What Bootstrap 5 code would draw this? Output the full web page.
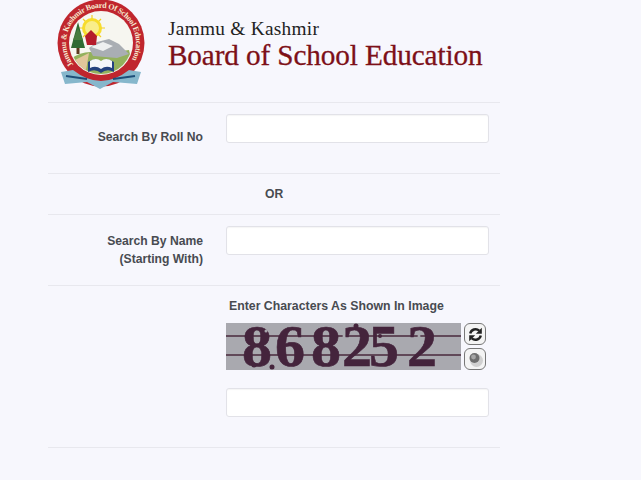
<!DOCTYPE html>
<html lang="en"><head><meta charset="utf-8"><title>Board of School Education</title>
<link href="https://cdn.jsdelivr.net/npm/bootstrap@5.3.0/dist/css/bootstrap.min.css" rel="stylesheet">
<style>
html,body{height:480px;overflow:hidden}
body{background:#f7f7fd;font-family:"Liberation Sans",Arial,sans-serif;color:#484b51}
.page-wrap{width:452px;margin-left:48px}
.brand-row{height:102px;gap:21px;margin-left:9px}
.logo-svg{width:90px;height:92px;flex:none;align-self:flex-start}
.brand-txt{font-family:"Liberation Serif",serif;margin-top:-13px}
.brand-top{font-size:19.3px;line-height:22px;color:#222;letter-spacing:.3px}
.brand-main{font-size:29.2px;line-height:31px;color:#7d1018;letter-spacing:-.1px;white-space:nowrap;-webkit-text-stroke:.3px #7d1018}
.form-line{border-top:1px solid #e8e8ee}
.lbl{width:155px;flex:none;text-align:right;font-weight:700;font-size:12.15px;line-height:18px}
.fld{width:263px;flex:none;margin-left:23px}
.in-box{height:29px;min-height:0;padding:4px 8px;border:1px solid #e2e2e8;border-radius:3px;background:#fff;box-shadow:inset 0 1px 1px rgba(0,0,0,.04)}
.row-roll{height:71px;padding-top:11px}
.row-roll .lbl{padding-top:14px}
.row-or{height:41px;padding-top:11px;font-weight:700;font-size:12.15px;line-height:18px;padding-left:217px}
.row-name{height:71px;padding-top:11px}
.row-name .lbl{padding-top:6px}
.row-cap{height:162px;padding-top:11px}
.cap-title{font-weight:700;font-size:12.3px;line-height:18px;margin-left:3px;margin-bottom:8px}
.cap-img{width:235px;height:47px;display:block;flex:none;overflow:visible}
.cap-btns{gap:3px;margin-left:3px}
.cap-btn{width:22px;height:22px;padding:0;border:1.5px solid #777;border-radius:6px;background:#f4f4f4;display:flex;align-items:center;justify-content:center}
.cap-input{margin-top:18px}
</style></head>
<body>
<div class="page-wrap">
 <div class="d-flex align-items-center brand-row">
  <svg class="logo-svg" viewBox="0 0 90 92" role="img" aria-label="Logo">
   <defs><path id="ringp" d="M16.5 64.6 A35 35 0 1 1 73 62.5"/><clipPath id="inn"><circle cx="44" cy="43" r="31"/></clipPath></defs>
   <circle cx="44" cy="43" r="43.5" fill="#c0262e"/>
   <circle cx="44" cy="43" r="32" fill="#f6f6f0"/>
   <g clip-path="url(#inn)">
    <g stroke="#f3cf22" stroke-width="1.2"><path d="M35 15 V41 M22 28 H48 M26 19 L44 37 M44 19 L26 37"/></g>
    <circle cx="35" cy="28" r="10" fill="#f7dc2c"/>
    <circle cx="35" cy="28" r="7" fill="#f9ed8a"/>
    <path d="M12 60 Q28 48 44 54 L72 50 L78 76 L12 76Z" fill="#93b15c"/>
    <path d="M14 62 L32 53 L28 76 L14 72Z" fill="#e2c79b"/>
    <path d="M32 48 L40 42 L52 39 L62 44 L72 54 L60 58 L36 56Z" fill="#a9aeb3"/>
    <path d="M34 47 L46 42 L56 46 L46 51Z" fill="#eef0f0"/>
    <path d="M21 22 L28 48 L14 48Z" fill="#2f6b33"/>
    <path d="M21 28 L26 40 L16 40Z" fill="#477d3d"/>
    <rect x="19.5" y="48" width="3" height="6" fill="#5d3a1e"/>
    <path d="M28 36 L34 30 L40 36 L39 45 L30 45Z" fill="#b51c2b"/>
   </g>
   <path d="M31 62 Q38 57 44 62 Q50 57 57 62 L57 72 Q50 68 44 73 Q38 68 31 72Z" fill="#24427e"/>
   <path d="M33 61 Q39 57 44 61 L44 69 Q39 65 33 68Z M55 61 Q49 57 44 61 L44 69 Q49 65 55 68Z" fill="#f4f6fa"/>
   <text font-family="Liberation Serif" font-weight="700" font-size="8" fill="#f6e9d0"><textPath href="#ringp" textLength="150">Jammu &amp; Kashmir Board Of School Education</textPath></text>
   <path d="M4 72 L16 70 Q44 92 72 70 L84 72 L80 84 L56 82 L43 89 L30 82 L8 84Z" fill="#86b7cc"/>
   <path d="M9 76 L30 79 M56 79 L78 76" stroke="#1d4e79" stroke-width="2"/>
  </svg>
  <div class="brand-txt">
   <div class="brand-top">Jammu &amp; Kashmir</div>
   <div class="brand-main">Board of School Education</div>
  </div>
 </div>

 <div class="form-line row-roll d-flex">
  <label class="lbl" for="roll">Search By Roll No</label>
  <div class="fld"><input id="roll" class="form-control in-box" type="text"></div>
 </div>
 <div class="form-line row-or">OR</div>
 <div class="form-line row-name d-flex">
  <label class="lbl" for="nm">Search By Name<br>(Starting With)</label>
  <div class="fld"><input id="nm" class="form-control in-box" type="text"></div>
 </div>
 <div class="form-line row-cap d-flex">
  <div class="lbl"></div>
  <div class="fld">
   <div class="cap-title">Enter Characters As Shown In Image</div>
   <div class="d-flex align-items-center">
    <svg class="cap-img" viewBox="0 0 235 47" role="img" aria-label="Captcha">
     <rect width="235" height="47" fill="#a9a9af"/>
     <path d="M0 13 H235 M0 32 H235" stroke="#4a2a3e" stroke-width="1.6"/>
     <text y="43" x="16 49 85 116 143 181" font-family="Liberation Serif" font-weight="700" font-size="60" fill="#44243c" stroke="#44243c" stroke-width=".6">868252</text>
     <g fill="#44243c"><circle cx="28" cy="42" r="2.5"/><circle cx="46" cy="44" r="2.5"/><circle cx="130" cy="3" r="2.5"/><circle cx="154" cy="13" r="2"/></g>
     <g fill="#a9a9af"><circle cx="40" cy="8" r="1.5"/><circle cx="66" cy="27" r="1.5"/><circle cx="118" cy="13" r="1.5"/><circle cx="193" cy="13" r="1.5"/></g>
    </svg>
    <div class="d-flex flex-column cap-btns">
     <button class="cap-btn" type="button" aria-label="Refresh">
      <svg width="17" height="17" viewBox="0 0 17 17" fill="none"><path d="M3.2 7.5 A5.5 5.5 0 0 1 12.2 4.6" stroke="#222" stroke-width="2.4"/><path d="M14.8 1.8 V7.8 H8.8Z" fill="#222"/><path d="M13.8 9.5 A5.5 5.5 0 0 1 4.8 12.4" stroke="#222" stroke-width="2.4"/><path d="M2.2 15.2 V9.2 H8.2Z" fill="#222"/></svg>
     </button>
     <button class="cap-btn" type="button" aria-label="Audio">
      <svg width="17" height="17" viewBox="0 0 17 17"><circle cx="9.5" cy="9.5" r="6.5" fill="#d0d0d0"/><circle cx="7.5" cy="7" r="5" fill="#6e6e6e"/><circle cx="6.5" cy="6" r="2.4" fill="#a5a5a5"/></svg>
     </button>
    </div>
   </div>
   <input class="form-control in-box cap-input" type="text" aria-label="Captcha text">
  </div>
 </div>
 <div class="form-line"></div>
</div>
<script src="https://cdn.jsdelivr.net/npm/bootstrap@5.3.0/dist/js/bootstrap.bundle.min.js"></script>
</body></html>
